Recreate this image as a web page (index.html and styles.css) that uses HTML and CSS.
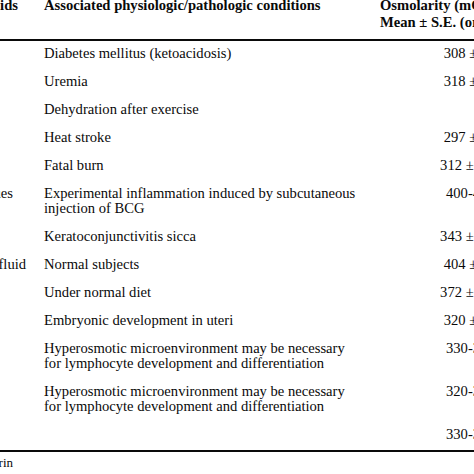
FILE: index.html
```html
<!DOCTYPE html>
<html lang="en">
<head>
<meta charset="utf-8">
<title>Osmolarity table</title>
<link rel="stylesheet" href="styles.css">
</head>
<body>
<table class="osmo">
  <colgroup>
    <col class="c-fluid">
    <col class="c-cond">
    <col class="c-val">
  </colgroup>
  <thead>
    <tr>
      <th class="first">Body fluids</th>
      <th>Associated physiologic/pathologic conditions</th>
      <th>Osmolarity (mOsm/L)<br>Mean ± S.E. (or range)</th>
    </tr>
  </thead>
  <tbody>
    <tr><td></td><td>Diabetes mellitus (ketoacidosis)</td><td class="v">308 ± 9</td></tr>
    <tr><td></td><td>Uremia</td><td class="v">318 ± 9</td></tr>
    <tr><td></td><td>Dehydration after exercise</td><td class="v"></td></tr>
    <tr><td></td><td>Heat stroke</td><td class="v">297 ± 9</td></tr>
    <tr><td></td><td>Fatal burn</td><td class="v">312 ± 14</td></tr>
    <tr><td>Rat tissues</td><td>Experimental inflammation induced by subcutaneous<br>injection of BCG</td><td class="v range">400-450</td></tr>
    <tr><td></td><td>Keratoconjunctivitis sicca</td><td class="v">343 ± 32</td></tr>
    <tr><td class="first">Seminal fluid</td><td>Normal subjects</td><td class="v">404 ± 8</td></tr>
    <tr><td></td><td>Under normal diet</td><td class="v">372 ± 10</td></tr>
    <tr><td></td><td>Embryonic development in uteri</td><td class="v">320 ± 8</td></tr>
    <tr><td></td><td>Hyperosmotic microenvironment may be necessary<br>for lymphocyte development and differentiation</td><td class="v range">330-360</td></tr>
    <tr><td></td><td>Hyperosmotic microenvironment may be necessary<br>for lymphocyte development and differentiation</td><td class="v range">320-340</td></tr>
    <tr><td></td><td></td><td class="v range">330-350</td></tr>
  </tbody>
</table>
<p class="note">BCG, bacillus Calmette-Guérin</p>
</body>
</html>
```
FILE: styles.css
```css
html, body {
  margin: 0;
  padding: 0;
  overflow: hidden;
  background: #ffffff;
}

body {
  font-family: "Liberation Serif", "Times New Roman", serif;
  font-size: 14.6px;
  color: #0a0a0a;
}

.osmo {
  border-collapse: collapse;
  table-layout: fixed;
  width: 602px;
  margin: -3.4px 0 0 -50px;
}

.c-fluid { width: 94px; }
.c-cond { width: 336px; }
.c-val { width: 172px; }

.osmo th {
  font-weight: bold;
  text-align: left;
  vertical-align: top;
  line-height: 17px;
  padding: 0 0 8.4px 0;
  white-space: nowrap;
  border-bottom: 2px solid #0a0a0a;
}

.osmo .first {
  text-indent: -3px;
}

.osmo td {
  line-height: 15px;
  padding: 4.7px 0 8.3px 0;
  vertical-align: top;
  white-space: nowrap;
  text-align: left;
}

.osmo td.v {
  text-align: center;
}

.osmo td.range {
  text-align: left;
  padding-left: 66px;
}

.osmo tbody tr:last-child td {
  border-bottom: 2px solid #0a0a0a;
}

.note {
  margin: 3px 0 0 -200px;
  width: 213px;
  text-align: right;
  font-size: 13px;
  line-height: 15px;
  white-space: nowrap;
}
```
